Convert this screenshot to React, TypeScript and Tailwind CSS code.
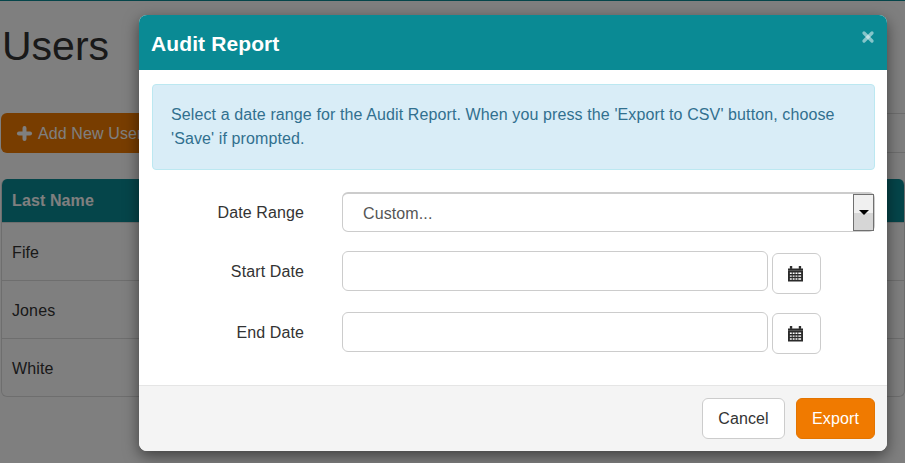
import { Plus, X } from 'lucide-react'

const ROWS = ['Fife', 'Jones', 'White']

function CalendarIcon() {
  return (
    <svg width="15" height="16" viewBox="0 0 16 17" fill="#2b2b2b">
      <rect x="2" y="0" width="2.5" height="3" />
      <rect x="11.5" y="0" width="2.5" height="3" />
      <path d="M0 2.5h16V5H0z" />
      <path
        fillRule="evenodd"
        d="M0 5h16v11.5H0zM2 7v1.5h2V7zm3 0v1.5h2V7zm3 0v1.5h2V7zm3 0v1.5h3V7zM2 10v1.5h2V10zm3 0v1.5h2V10zm3 0v1.5h2V10zm3 0v1.5h3V10zM2 13v1.5h2V13zm3 0v1.5h2V13zm3 0v1.5h2V13zm3 0v1.5h3V13z"
      />
    </svg>
  )
}

function DateRow({ label, className, btnClass }: { label: string; className: string; btnClass: string }) {
  return (
    <div className={`flex items-start ${className}`}>
      <label className="h-10 w-[152px] pt-px text-right leading-10 text-[#333]">{label}</label>
      <input className="ml-[38px] h-10 w-[426px] rounded-md border border-[#ccc] bg-white" />
      <button className={`ml-1 flex h-[41px] w-[49px] items-center justify-center rounded-md border border-[#ccc] bg-white pr-0.5 ${btnClass}`}>
        <CalendarIcon />
      </button>
    </div>
  )
}

export default function App() {
  return (
    <div className="relative h-[463px] w-[905px] overflow-hidden bg-white font-['Liberation_Sans',Arial,sans-serif] text-base tracking-[0.11px] text-[#333]">
      {/* page behind the dialog */}
      <div className="h-px bg-[#0a8a94]" />
      <div className="pl-px">
        <h1 className="ml-px mt-[23px] text-[41px] leading-[44px] tracking-normal">Users</h1>
        <div className="mt-[45px] flex items-center justify-between">
          <button className="flex h-10 items-center rounded-md bg-[#f07a00] pl-3.5 pr-4 pt-px text-white">
            <Plus className="h-[19px] w-[19px]" strokeWidth={5} />
            <span className="ml-1">Add New User</span>
          </button>
          <div className="h-10 w-[100px] border-y border-[#ddd]" />
        </div>
        <div className="mt-[26px] overflow-hidden rounded-md border-x border-b border-[#ddd]">
          <div className="flex h-[43px] items-center bg-[#0a8a94] pl-2.5 font-bold text-white">Last Name</div>
          {ROWS.map(name => (
            <div key={name} className="flex h-[58px] items-center border-t border-[#ddd] pl-2.5 pt-0.5">
              {name}
            </div>
          ))}
        </div>
      </div>

      {/* backdrop */}
      <div className="absolute inset-0 bg-black/50" />

      {/* dialog */}
      <div className="absolute left-[139px] top-[15px] h-[436px] w-[748px] overflow-hidden rounded-lg bg-white shadow-[0_5px_15px_rgba(0,0,0,0.5)]">
        <div className="flex h-[55px] items-center justify-between bg-[#0a8a94] pl-3 pr-[11px]">
          <h4 className="mt-0.5 text-[21px] font-bold text-white">Audit Report</h4>
          <X className="mb-[11px] h-4 w-4 text-white/50" strokeWidth={5} />
        </div>

        <div className="pl-[13px] pr-3 pt-3.5">
          <div className="h-[86px] rounded-[4px] border border-[#bce8f1] bg-[#d9edf7] px-[18px] py-[18px] leading-6 text-[#31708f]">
            Select a date range for the Audit Report. When you press the 'Export to CSV' button, choose 'Save' if prompted.
          </div>

          <div className="mt-[22px] flex items-center">
            <label className="w-[152px] pt-0.5 text-right">Date Range</label>
            <div className="ml-[38px] flex h-10 w-[533px] items-stretch justify-between rounded-md border border-[#ccc] border-t-2 bg-white pl-5">
              <span className="self-center pt-0.5 text-[#555]">Custom...</span>
              <div className="flex w-[21px] items-center justify-center border border-[#707070] bg-gradient-to-b from-[#f0f0f0] from-50% to-[#d6d6d6] to-50%">
                <div className="h-0 w-0 border-x-[5px] border-t-[5px] border-x-transparent border-t-black" />
              </div>
            </div>
          </div>
          <DateRow label="Start Date" className="mt-[19px]" btnClass="mt-0.5" />
          <DateRow label="End Date" className="mt-[18px]" btnClass="mt-px" />
        </div>

        <div className="absolute inset-x-0 bottom-0 flex h-[66px] items-center justify-end gap-[11px] border-t border-[#e5e5e5] bg-[#f4f4f4] pr-3">
          <button className="h-[41px] w-[83px] rounded-md border border-[#ccc] bg-white text-[#333]">Cancel</button>
          <button className="h-[41px] w-[79px] rounded-md border border-[#e37400] bg-[#f07a00] text-white">Export</button>
        </div>
      </div>
    </div>
  )
}
